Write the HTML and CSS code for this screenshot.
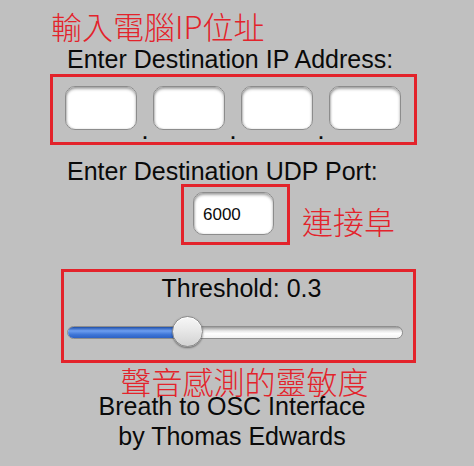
FILE: index.html
```html
<!DOCTYPE html>
<html lang="zh-Hant">
<head>
<meta charset="utf-8">
<title>Breath to OSC Interface</title>
<link rel="stylesheet" href="styles.css">
</head>
<body>
<div class="page">
  <h1 class="note title">輸入電腦IP位址</h1>
  <div class="content">
    <div class="label">Enter Destination IP Address:</div>
    <div class="mark ip-box">
      <div class="field"></div>
      <span class="dot">.</span>
      <div class="field"></div>
      <span class="dot">.</span>
      <div class="field"></div>
      <span class="dot">.</span>
      <div class="field"></div>
    </div>
    <div class="label port-label">Enter Destination UDP Port:</div>
    <div class="port-row">
      <div class="mark port-box">
        <div class="field port-field">6000</div>
        <span class="note port-note">連接阜</span>
      </div>
    </div>
    <div class="mark threshold-box">
      <div class="threshold-label">Threshold: 0.3</div>
      <div class="slider">
        <div class="track">
          <div class="fill" style="width: 36%"></div>
        </div>
        <div class="thumb" style="left: 35.8%"></div>
      </div>
    </div>
    <div class="note sens-note">聲音感測的靈敏度</div>
    <div class="credits">
      <div>Breath to OSC Interface</div>
      <div class="credit-2">by Thomas Edwards</div>
    </div>
  </div>
</div>
</body>
</html>
```
FILE: styles.css
```css
html, body {
  margin: 0;
  padding: 0;
  background: #c0c0c0;
}

.page {
  width: 474px;
  height: 466px;
  overflow: hidden;
  font-family: "Liberation Sans", Arial, sans-serif;
  color: #0a0a0a;
}

.note {
  font-family: "Noto Sans CJK TC", "Noto Sans CJK SC", sans-serif;
  font-weight: 300;
  color: #e3232b;
  font-size: 31px;
}

.title {
  margin: 0;
  padding: 10px 0 0 51px;
  line-height: 31px;
}

.content {
  margin-left: 50px;
  width: 367px;
  display: flex;
  flex-direction: column;
}

.label {
  font-size: 25px;
  line-height: 26px;
  padding-left: 17px;
  margin-top: 5px;
}

.mark {
  border: 3px solid #e3232b;
}

.ip-box {
  margin-top: 2px;
  padding: 9px 13px 12px 12px;
  display: flex;
  align-items: flex-end;
}

.field {
  background: #fff;
  border: 1px solid #8c8c8c;
  border-radius: 10px;
  box-shadow: inset 0 2px 3px rgba(0, 0, 0, 0.35), inset 1px 0 2px rgba(0, 0, 0, 0.15);
  box-sizing: border-box;
  width: 72px;
  height: 44px;
  flex: none;
}

.dot {
  width: 16px;
  text-align: center;
  font-size: 18px;
  font-weight: bold;
  line-height: 10px;
  margin-bottom: -8px;
}

.port-label {
  margin-top: 13px;
}

.port-row {
  display: flex;
  justify-content: center;
  padding-left: 4px;
}

.port-box {
  position: relative;
  padding: 5px 13px 7px 9px;
}

.port-field {
  width: 81px;
  height: 43px;
  font-size: 17px;
  line-height: 43px;
  padding-left: 9px;
}

.port-note {
  position: absolute;
  left: calc(100% + 15px);
  top: 18px;
  line-height: 31px;
  white-space: nowrap;
}

.threshold-box {
  margin: 24px 1px 0 11px;
  padding: 3px 10px 13px 3px;
}

.threshold-label {
  font-size: 25px;
  line-height: 26px;
  text-align: center;
  padding-left: 13px;
}

.slider {
  position: relative;
  height: 31px;
  margin-top: 15px;
  display: flex;
  align-items: center;
}

.track {
  flex: 1;
  height: 13px;
  box-sizing: border-box;
  border-radius: 7px;
  border: 1px solid #8e8e8e;
  background: linear-gradient(#9a9a9a 0%, #e8e8e8 35%, #ffffff 60%, #f2f2f2 100%);
  overflow: hidden;
  margin-top: 1px;
}

.fill {
  height: 100%;
  background: linear-gradient(#1f4fa8 0%, #6d9ef0 35%, #3d74d6 70%, #2e62c4 100%);
}

.thumb {
  position: absolute;
  top: 0;
  width: 31px;
  height: 31px;
  margin-left: -15px;
  box-sizing: border-box;
  border-radius: 50%;
  border: 1px solid #8a8a8a;
  background: linear-gradient(#f7f7f7 0%, #e6e6e6 50%, #d2d2d2 100%);
  box-shadow: 0 1px 2px rgba(0, 0, 0, 0.45), inset 0 1px 1px #fff;
}

.sens-note {
  margin-top: 7px;
  line-height: 22px;
  text-align: center;
  padding-left: 22px;
}

.credits {
  font-size: 25px;
  line-height: 28px;
  text-align: center;
  padding-right: 3px;
}

.credit-2 {
  margin-top: 2px;
}
```
